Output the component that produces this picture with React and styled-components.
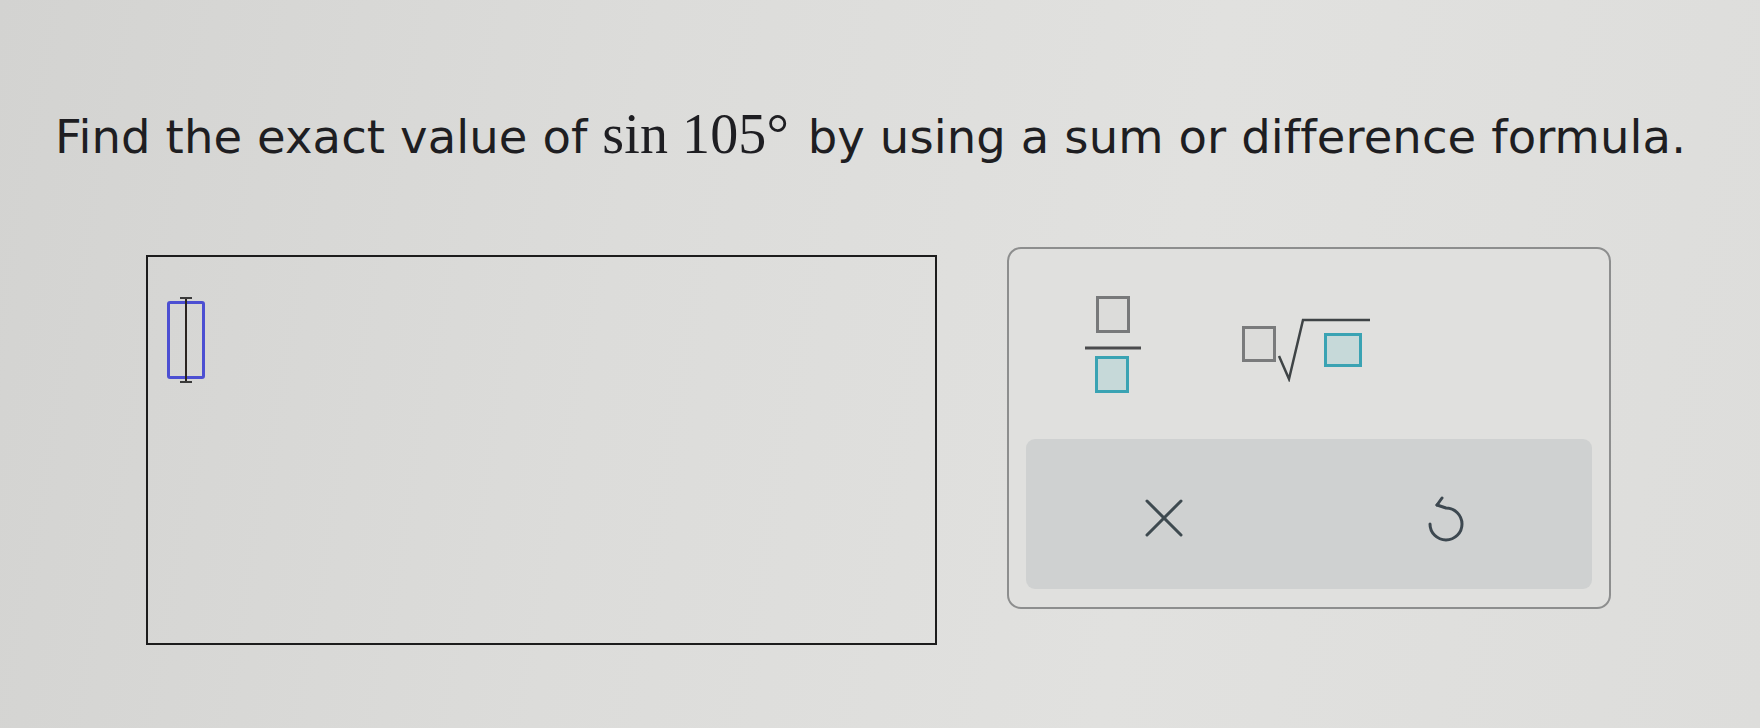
import React from 'react'
import styled, { createGlobalStyle } from 'styled-components'

const GlobalStyle = createGlobalStyle`
  html, body {
    margin: 0;
    padding: 0;
  }
  body {
    width: 1760px;
    height: 728px;
    overflow: hidden;
    font-family: "DejaVu Sans", Verdana, sans-serif;
    background: linear-gradient(100deg, #d3d3d1 0%, #dcdcda 35%, #e1e1df 65%, #dddddb 100%);
    color: #1f1f22;
  }
`

const Page = styled.main`
  display: flex;
  flex-direction: column;
  padding: 104px 0 0 55px;
`

const Prompt = styled.p`
  margin: 0;
  font-size: 46.5px;
  line-height: 60px;
  letter-spacing: 0.1px;
  color: #1e1e22;
  white-space: nowrap;
`

const MathExpr = styled.span`
  font-family: "Liberation Serif", "Times New Roman", serif;
  font-size: 56px;
  margin: 0 4px 0 0;
`

const Workspace = styled.section`
  display: flex;
  align-items: flex-start;
  gap: 70px;
  margin: 80px 0 0 91px;
`

const AnswerBox = styled.div`
  box-sizing: border-box;
  width: 791px;
  height: 390px;
  margin-top: 8px;
  border: 2px solid #1c1c1c;
  padding: 44px 0 0 19px;
`

const Cursor = styled.div`
  position: relative;
  box-sizing: border-box;
  width: 38px;
  height: 78px;
  border: 3px solid #4c4fd2;
  border-radius: 3px;
`

const Caret = styled.span`
  position: absolute;
  left: 50%;
  top: -7px;
  bottom: -7px;
  width: 2px;
  margin-left: -1px;
  background: #2a2320;

  &::before,
  &::after {
    content: '';
    position: absolute;
    left: -5px;
    width: 12px;
    height: 2px;
    background: #3a3a3a;
  }
  &::before { top: 0; }
  &::after { bottom: 0; }
`

const Palette = styled.aside`
  box-sizing: border-box;
  width: 604px;
  height: 362px;
  border: 2px solid #8d8e8e;
  border-radius: 14px;
  background: #e0e0de;
  padding: 0 17px 18px;
  display: flex;
  flex-direction: column;
`

const TemplateRow = styled.div`
  flex: 1;
  display: flex;
  align-items: flex-start;
  padding: 47px 0 0 57px;
  gap: 99px;
`

const TemplateButton = styled.button`
  border: 0;
  background: transparent;
  padding: 0;
  margin-top: ${(p) => p.$offset || 0}px;
  display: flex;
`

const ActionBar = styled.div`
  height: 150px;
  border-radius: 9px;
  background: #cfd1d1;
  display: grid;
  grid-template-columns: 1fr 1fr;
  align-items: center;
  justify-items: center;
`

const ActionButton = styled.button`
  border: 0;
  background: transparent;
  padding: 0;
  display: flex;
  margin-left: ${(p) => p.$shift || 0}px;
  margin-top: ${(p) => p.$drop || 0}px;
`

const FractionIcon = () => (
  <svg width="60" height="98" viewBox="0 0 60 98">
    <rect x="14.5" y="1.5" width="31" height="34" fill="#dcdcda" stroke="#78797a" strokeWidth="3" />
    <line x1="2" y1="52" x2="58" y2="52" stroke="#4a4b4d" strokeWidth="3" />
    <rect x="13.5" y="61.5" width="31" height="34" fill="#c6d9d9" stroke="#3aa3b3" strokeWidth="3" />
  </svg>
)

const SqrtIcon = () => (
  <svg width="130" height="64" viewBox="0 0 130 64">
    <rect x="1.5" y="9.5" width="31" height="33" fill="#dcdcda" stroke="#7a7b7c" strokeWidth="3" />
    <polyline points="37,38 47,61 61,2 128,2" fill="none" stroke="#3f4446" strokeWidth="2.5" strokeLinejoin="miter" />
    <rect x="83.5" y="16.5" width="35" height="31" fill="#c6d9d9" stroke="#3aa3b3" strokeWidth="3" />
  </svg>
)

const ClearIcon = () => (
  <svg width="40" height="40" viewBox="0 0 40 40" fill="none" stroke="#3e4a50" strokeWidth="3" strokeLinecap="round">
    <line x1="3" y1="3" x2="37" y2="37" />
    <line x1="37" y1="3" x2="3" y2="37" />
  </svg>
)

const UndoIcon = () => (
  <svg width="40" height="46" viewBox="0 0 40 46" fill="none" stroke="#3d4850" strokeWidth="3" strokeLinecap="round" strokeLinejoin="round">
    <path d="M4 28 A16 16 0 1 0 20 12 L11 9" />
    <path d="M11 9 L16 2" />
  </svg>
)

export default function App() {
  return (
    <>
      <GlobalStyle />
      <Page>
        <Prompt>
          Find the exact value of <MathExpr>sin 105°</MathExpr> by using a sum or difference formula.
        </Prompt>
        <Workspace>
          <AnswerBox>
            <Cursor>
              <Caret />
            </Cursor>
          </AnswerBox>
          <Palette>
            <TemplateRow>
              <TemplateButton aria-label="fraction">
                <FractionIcon />
              </TemplateButton>
              <TemplateButton aria-label="mixed root" $offset={22}>
                <SqrtIcon />
              </TemplateButton>
            </TemplateRow>
            <ActionBar>
              <ActionButton aria-label="clear" $shift={-8} $drop={7}>
                <ClearIcon />
              </ActionButton>
              <ActionButton aria-label="undo" $shift={-10} $drop={9}>
                <UndoIcon />
              </ActionButton>
            </ActionBar>
          </Palette>
        </Workspace>
      </Page>
    </>
  )
}
